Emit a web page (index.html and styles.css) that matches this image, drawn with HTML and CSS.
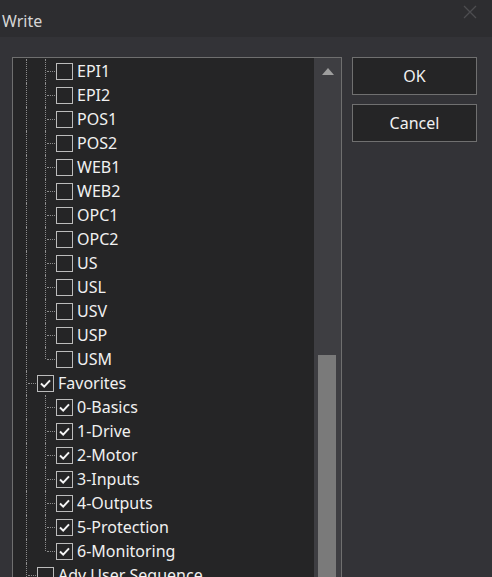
FILE: index.html
```html
<!DOCTYPE html>
<html lang="en">
<head>
    <meta charset="UTF-8">
    <title>Write</title>
    <link rel="stylesheet" href="styles.css">
</head>
<body>

    <!-- Title bar -->
    <div class="titlebar">
        <span class="title">Write</span>
        <svg class="close" width="14" height="14" viewBox="0 0 14 14">
            <path d="M1 1 L13 13 M13 1 L1 13" stroke="#4d4d50" stroke-width="1.3" fill="none"/>
        </svg>
    </div>

    <div class="content">
        <!-- Tree -->
        <div class="tree">
            <div class="rows" id="rows"></div>
            <div class="scrollbar">
                <div class="arrow"><span class="tri"></span></div>
                <div class="thumb"></div>
            </div>
        </div>

        <!-- Buttons -->
        <div class="buttons">
            <button type="button">OK</button>
            <button type="button">Cancel</button>
        </div>
    </div>

    <script>
        // guides: p = pipe, t = tee, e = elbow
        const items = [
            ['EPI1', 'pt', 0], ['EPI2', 'pt', 0], ['POS1', 'pt', 0], ['POS2', 'pt', 0],
            ['WEB1', 'pt', 0], ['WEB2', 'pt', 0], ['OPC1', 'pt', 0], ['OPC2', 'pt', 0],
            ['US', 'pt', 0], ['USL', 'pt', 0], ['USV', 'pt', 0], ['USP', 'pt', 0],
            ['USM', 'pe', 0],
            ['Favorites', 't', 1],
            ['0-Basics', 'pt', 1], ['1-Drive', 'pt', 1], ['2-Motor', 'pt', 1],
            ['3-Inputs', 'pt', 1], ['4-Outputs', 'pt', 1], ['5-Protection', 'pt', 1],
            ['6-Monitoring', 'pe', 1],
            ['Adv User Sequence', 't', 0]
        ];
        const names = { p: 'pipe', t: 'tee', e: 'elbow' };
        const tick = '<svg width="15" height="15" viewBox="0 0 15 15"><path d="M3 7.5 L6.2 10.6 L12 4.4" stroke="#f4f4f4" stroke-width="2" fill="none"/></svg>';
        const list = document.getElementById('rows');

        items.forEach(([label, guides, checked]) => {
            const row = document.createElement('div');
            row.className = 'row';
            let html = '';
            guides.split('').forEach(g => {
                html += '<span class="guide ' + names[g] + '"></span>';
            });
            html += '<span class="box">' + (checked ? tick : '') + '</span>';
            html += '<span class="label">' + label + '</span>';
            row.innerHTML = html;
            list.appendChild(row);
        });
    </script>
</body>
</html>
```

FILE: styles.css
```css
/* General Styling */
html, body {
    margin: 0;
    height: 100%;
    overflow: hidden;
}

body {
    font-family: "Noto Sans", "Open Sans", sans-serif;
    background-color: #333337;
    color: #f1f1f1;
}

.titlebar {
    height: 37px;
    background-color: #2d2d30;
    display: flex;
    align-items: center;
    justify-content: space-between;
    padding: 0 15px 0 2px;
}

.title {
    font-size: 16px;
    color: #d6d6d6;
    margin-top: 5px;
}

.close {
    align-self: flex-start;
    margin-top: 5px;
}

.content {
    display: flex;
    align-items: flex-start;
    gap: 10px;
    padding: 20px 0 0 12px;
}

/* Tree view */
.tree {
    display: flex;
    width: 328px;
    height: 520px;
    overflow: hidden;
    border: 1px solid #6f6f6f;
    border-bottom: none;
    background-color: #252526;
}

.rows {
    flex: 1;
    padding: 1px 0 0 4px;
}

.row {
    display: flex;
    align-items: center;
    height: 24px;
    font-size: 16px;
}

.guide {
    position: relative;
    width: 19px;
    height: 24px;
    flex-shrink: 0;
}

.guide::before,
.guide::after {
    content: "";
    position: absolute;
}

.pipe::before,
.tee::before {
    left: 9px;
    top: 0;
    bottom: 0;
    border-left: 1px dotted #8c8c8c;
}

.elbow::before {
    left: 9px;
    top: 0;
    height: 12px;
    border-left: 1px dotted #8c8c8c;
}

.tee::after,
.elbow::after {
    left: 11px;
    width: 8px;
    top: 12px;
    border-top: 1px dotted #8c8c8c;
}

.box {
    width: 15px;
    height: 15px;
    border: 1px solid #bcbcbc;
    margin-left: 1px;
    display: flex;
    flex-shrink: 0;
}

.label {
    margin-left: 4px;
    white-space: nowrap;
}

/* Scrollbar */
.scrollbar {
    width: 27px;
    background-color: #3e3e42;
    flex-shrink: 0;
}

.arrow {
    height: 27px;
    display: flex;
    align-items: center;
    justify-content: center;
}

.tri {
    width: 0;
    height: 0;
    border-left: 6px solid transparent;
    border-right: 6px solid transparent;
    border-bottom: 7px solid #9e9e9e;
    margin-left: 1px;
}

.thumb {
    margin: 270px 0 0 4px;
    width: 18px;
    height: 300px;
    background-color: #7a7a7a;
}

/* Buttons */
.buttons {
    display: flex;
    flex-direction: column;
    gap: 9px;
}

button {
    width: 125px;
    height: 38px;
    font-family: "Noto Sans", "Open Sans", sans-serif;
    font-size: 16px;
    color: #f1f1f1;
    background-color: #252526;
    border: 1px solid #707070;
    padding: 0;
    cursor: pointer;
}
```
